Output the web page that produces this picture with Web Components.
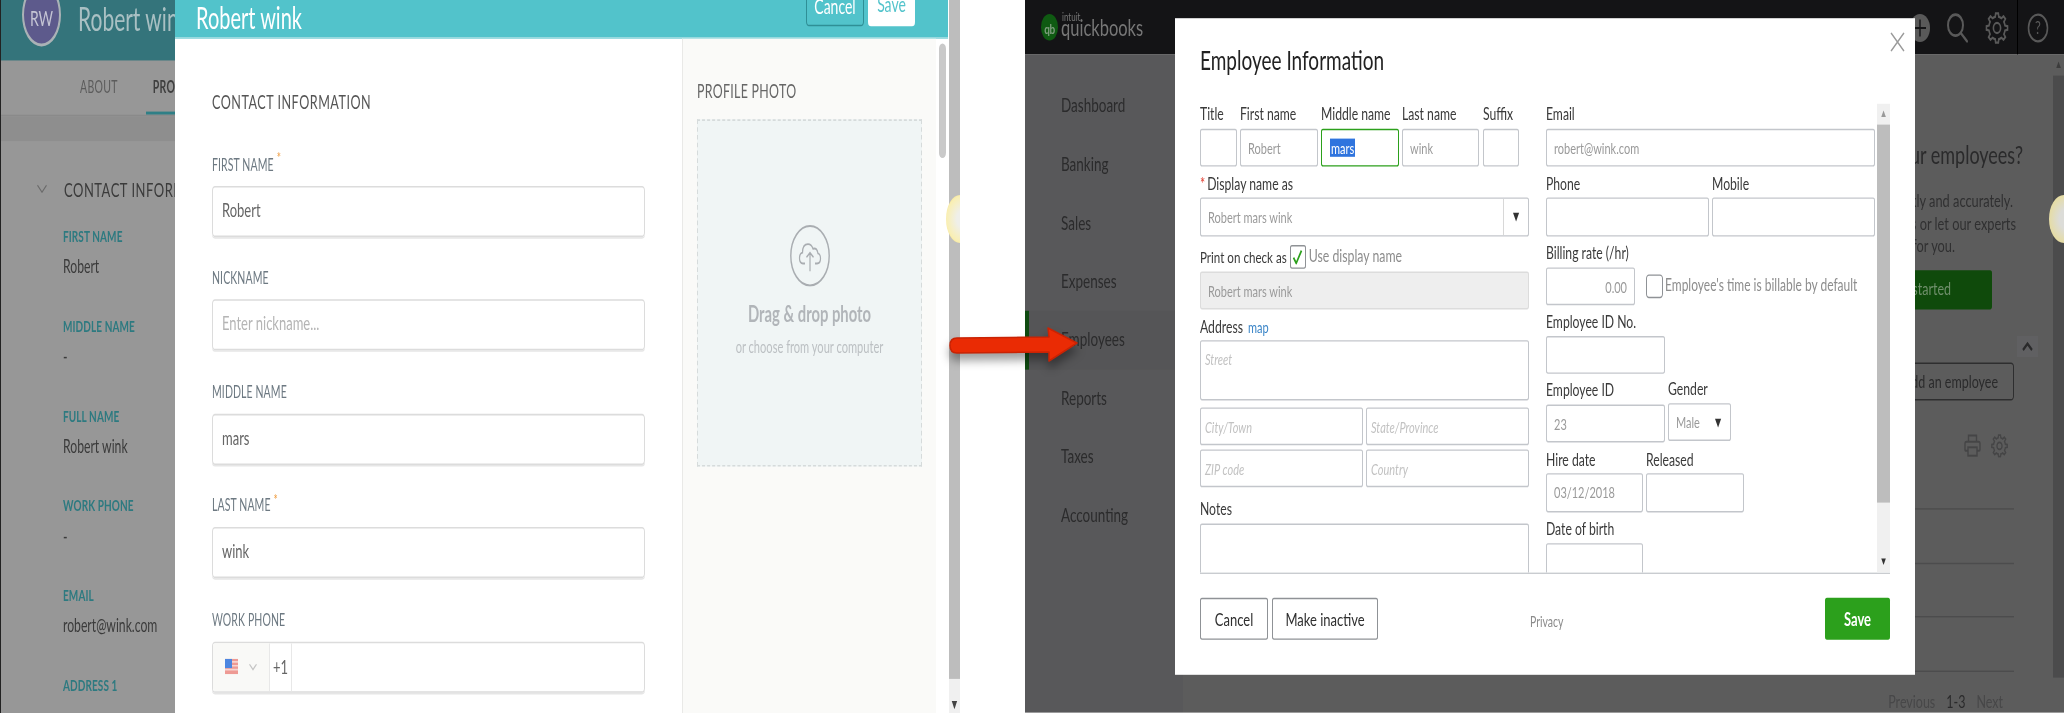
<!DOCTYPE html>
<html>
<head>
<meta charset="utf-8">
<title>Employee screens</title>
<style>
  html, body { margin: 0; background: #fff; }
  body { width: 2064px; height: 713px; overflow: hidden; }
</style>
</head>
<body>
<shot-pair></shot-pair>
<script>
// the two screenshots in the reference are stretched vertically, each by its own amount
const SL = 1.55;
const SR = 1.4;
const vl = n => (n / SL).toFixed(2) + 'px';
const vr = n => (n / SR).toFixed(2) + 'px';

function gearPath(c, r1, r2, n) {
  let d = '';
  for (let i = 0; i < n; i++) {
    const step = Math.PI * 2 / n;
    const a = i * step;
    const pts = [[r1, a - step * .5], [r1, a - step * .28], [r2, a - step * .16], [r2, a + step * .16], [r1, a + step * .28]];
    pts.forEach(([r, t], j) => {
      d += (i === 0 && j === 0 ? 'M' : 'L') + (c + r * Math.cos(t)).toFixed(2) + ' ' + (c + r * Math.sin(t)).toFixed(2);
    });
  }
  return d + 'Z';
}

class ShotPair extends HTMLElement {
  connectedCallback() {
    this.attachShadow({ mode: 'open' });
    this.shadowRoot.innerHTML = `
      <style>
        :host { display: flex; width: 2064px; height: 713px; position: relative; overflow: hidden; background: #fff; }
        bamboo-shot { flex: 0 0 960px; }
        qbo-shot { flex: 0 0 1039px; margin-left: 65px; }
        svg { position: absolute; left: 930px; top: 310px; }
      </style>
      <bamboo-shot></bamboo-shot>
      <qbo-shot></qbo-shot>
      <svg width="170" height="70" viewBox="0 0 170 70" style="filter:drop-shadow(0 7px 5px rgba(0,0,0,.38))">
        <path d="M27 28 L119 27 L118 18 L147 33 L119 51 L119 42 L27 43 Q20 43 20 35.5 Q20 28 27 28Z" fill="#ea2b04" stroke="#c92304" stroke-width="1.5" stroke-linejoin="round"/>
      </svg>
    `;
  }
}

/* ---------- left screenshot ---------- */

class BambooShot extends HTMLElement {
  connectedCallback() {
    this.attachShadow({ mode: 'open' });
    this.shadowRoot.innerHTML = `
      <style>
        :host { display: block; height: 713px; overflow: hidden; position: relative; font-family: Lato, "Liberation Sans", sans-serif; }
        .stage { display: flex; width: 960px; height: ${vl(713)}; transform: scaleY(${SL}); transform-origin: 0 0; }
        .bar { flex: 0 0 11px; margin-left: 1px; display: flex; flex-direction: column; background: #f0f0f0; }
        .bar i { display: block; height: ${vl(679)}; background: #bdbdbd; }
        .bar b { margin-top: auto; text-align: center; font: 400 7px/${vl(14)} "DejaVu Sans", sans-serif; color: #444; }
        .glow { position: absolute; left: 946px; top: 195px; width: 28px; height: 48px; border-radius: 50%;
          background: radial-gradient(ellipse at 60% 50%, #efefea 25%, #f9efb4 68%, #efd060 100%); }
      </style>
      <div class="stage">
        <profile-backdrop></profile-backdrop>
        <employee-drawer></employee-drawer>
        <div class="bar"><i></i><b>▼</b></div>
      </div>
      <div class="glow"></div>
    `;
  }
}

class ProfileBackdrop extends HTMLElement {
  connectedCallback() {
    this.attachShadow({ mode: 'open' });
    const rows = [['FIRST NAME', 'Robert'], ['MIDDLE NAME', '-'], ['FULL NAME', 'Robert wink'], ['WORK PHONE', '-'], ['EMAIL', 'robert@wink.com'], ['ADDRESS 1', '']];
    this.shadowRoot.innerHTML = `
      <style>
        :host { display: block; flex: 0 0 174px; border-left: 1px solid #222; overflow: hidden; background: #979797; white-space: nowrap; color: #3b3b3b; }
        .head { display: flex; height: ${vl(60)}; background: #34747b; overflow: hidden; }
        .avatar { flex: 0 0 auto; box-sizing: border-box; width: 39px; height: ${vl(64)}; margin: ${vl(-17)} 0 0 21px; border: 2px solid #aab2b6; border-radius: 50%;
          background: #5d5a8c; color: #c4c4d4; font-size: 14px; text-align: center; line-height: ${vl(64)}; }
        .name { margin-left: 17px; font-size: 21px; line-height: ${vl(36)}; color: #a9c0c3; }
        .tabs { display: flex; height: ${vl(54)}; border-bottom: 1px solid #8a8a8a; font-size: 10.5px; letter-spacing: .3px; line-height: ${vl(54)}; }
        .tabs span:first-child { margin-left: 79px; color: #5c5c5c; }
        .tabs span:last-child { margin-left: 28px; padding-left: 7px; font-weight: 700; flex: 1; overflow: hidden; color: #3f3f3f; position: relative; }
        .tabs span:last-child::after { content: ""; position: absolute; left: 0; right: 0; bottom: 0; height: ${vl(3)}; background: #2f7f86; }
        .band { height: ${vl(25)}; background: #8e8e8e; }
        .title { display: flex; align-items: center; height: ${vl(28)}; margin: ${vl(34)} 0 ${vl(16)}; font-size: 13px; letter-spacing: .5px; }
        .title svg { margin: 0 17px 0 36px; flex: none; }
        .row { height: ${vl(90)}; padding-left: 62px; }
        .row b { display: block; height: ${vl(36)}; line-height: ${vl(36)}; font-size: 10px; font-weight: 700; color: #2d7a80; letter-spacing: .1px; }
        .row span { display: block; height: ${vl(26)}; line-height: ${vl(26)}; font-size: 12.2px; }
      </style>
      <div class="head"><div class="avatar">RW</div><div class="name">Robert wink</div></div>
      <div class="tabs"><span>ABOUT</span><span>PROFILE</span></div>
      <div class="band"></div>
      <div class="title"><svg width="10" height="6" viewBox="0 0 10 6"><path d="M.5 .5 L5 5 L9.5 .5" fill="none" stroke="#6a6a6a"/></svg>CONTACT INFORMATION</div>
      ${rows.map(([k, val]) => `<div class="row"><b>${k}</b><span>${val}</span></div>`).join('')}
    `;
  }
}

class EmployeeDrawer extends HTMLElement {
  connectedCallback() {
    this.attachShadow({ mode: 'open' });
    this.shadowRoot.innerHTML = `
      <style>
        :host { display: flex; flex-direction: column; flex: 0 0 773px; background: #fff; overflow: hidden; }
        header { display: flex; flex: 0 0 auto; height: ${vl(39)}; box-sizing: border-box; background: #52c3cb; border-bottom: 1px solid #a8dfe3; padding: 0 33px 0 21px; }
        h1 { margin: 0 auto 0 0; font: 400 20px/${vl(36)} Lato, sans-serif; color: #fff; }
        .btn { box-sizing: border-box; height: ${vl(44)}; margin-top: ${vl(-18)}; border-radius: 3px; font-size: 14px; text-align: center; line-height: ${vl(48)}; }
        .cancel { width: 58px; border: 1px solid #2f8f96; color: #fff; }
        .save { width: 47px; margin-left: 4px; background: #fff; color: #52c3cb; }
        main { display: flex; flex: 1; min-height: 0; }
        .form { flex: 0 0 470px; padding-left: 37px; }
        h2 { margin: ${vl(49)} 0 ${vl(37)}; font: 400 12.6px/${vl(28)} Lato, sans-serif; letter-spacing: .5px; color: #555; }
        aside { flex: 0 0 239px; padding-left: 14px; background: #fafaf8; border-left: 1px solid #e9e9e7; }
        aside h3 { margin: ${vl(37)} 0 ${vl(16)}; font: 400 12.4px/${vl(30)} Lato, sans-serif; letter-spacing: .3px; color: #666; height: ${vl(28)}; }
        .drop { display: flex; flex-direction: column; align-items: center; box-sizing: border-box; width: 225px; height: ${vl(346)}; padding-top: ${vl(104)};
          background: #f0f5f5; border: 1px dashed #d6dbdb; }
        .drop strong { margin-top: ${vl(10)}; font: 700 14.8px/${vl(34)} Lato, sans-serif; color: #b1b5b9; }
        .drop small { margin-top: ${vl(4)}; font: 400 11.1px/${vl(24)} Lato, sans-serif; color: #bcc0c3; }
        .gutter { flex: 0 0 12px; padding-left: 3px; box-sizing: border-box; }
        .gutter i { display: block; width: 7px; height: ${vl(115)}; margin-top: ${vl(4)}; background: #c9c9c9; border-radius: 4px; }
      </style>
      <header>
        <h1>Robert wink</h1>
        <div class="btn cancel">Cancel</div>
        <div class="btn save">Save</div>
      </header>
      <main>
        <div class="form">
          <h2>CONTACT INFORMATION</h2>
          <bb-field label="FIRST NAME" required value="Robert"></bb-field>
          <bb-field label="NICKNAME" placeholder="Enter nickname..."></bb-field>
          <bb-field label="MIDDLE NAME" value="mars"></bb-field>
          <bb-field label="LAST NAME" required value="wink"></bb-field>
          <bb-field label="WORK PHONE"><phone-prefix></phone-prefix></bb-field>
        </div>
        <aside>
          <h3>PROFILE PHOTO</h3>
          <div class="drop">
            <svg width="40" height="40" viewBox="0 0 40 40">
              <circle cx="20" cy="20" r="19.2" fill="none" stroke="#a9adb1" stroke-width="1.4"/>
              <path d="M15 25 H13 Q9.5 25 9.5 21.5 Q9.5 18.5 12.5 18 Q12.5 12.5 18 12.5 Q21.5 12.5 23 15.5 Q27 14.5 28 18.5 Q30.5 19 30.5 21.8 Q30.5 25 27 25 H25" fill="none" stroke="#a9adb1" stroke-width="1.2"/>
              <path d="M20 30 V18 M16.5 21 L20 18 L23.5 21" fill="none" stroke="#a9adb1" stroke-width="1.2"/>
            </svg>
            <strong>Drag &amp; drop photo</strong>
            <small>or choose from your computer</small>
          </div>
        </aside>
        <div class="gutter"><i></i></div>
      </main>
    `;
  }
}

class BbField extends HTMLElement {
  connectedCallback() {
    this.attachShadow({ mode: 'open' });
    const val = this.getAttribute('value') || '';
    const ph = this.getAttribute('placeholder') || '';
    const star = this.hasAttribute('required') ? '<sup>*</sup>' : '';
    this.shadowRoot.innerHTML = `
      <style>
        :host { display: block; width: 433px; margin-bottom: ${vl(30)}; }
        label { display: block; height: ${vl(20)}; margin-bottom: ${vl(13)}; font: 400 10.5px/${vl(22)} Lato, sans-serif; color: #6d7982; letter-spacing: .1px; }
        sup { color: #ef9a3c; font-size: 10px; line-height: 0; margin-left: 3px; }
        .box { display: flex; box-sizing: border-box; height: ${vl(51)}; border: 1px solid #dcdcdc; border-radius: 3px; box-shadow: 0 1px 0 #e6e6e6;
          font: 400 13px/${vl(46)} Lato, sans-serif; color: #666; overflow: hidden; }
        .txt { padding-left: 9px; }
        .ph { color: #b5b5b5; }
      </style>
      <label>${this.getAttribute('label')}${star}</label>
      <div class="box"><slot><span class="txt ${ph ? 'ph' : ''}">${val || ph}</span></slot></div>
    `;
  }
}

class PhonePrefix extends HTMLElement {
  connectedCallback() {
    this.attachShadow({ mode: 'open' });
    this.shadowRoot.innerHTML = `
      <style>
        :host { display: flex; align-items: stretch; height: 100%; color: #666; font: 400 13px/1 Lato, sans-serif; }
        .flag { display: flex; align-items: center; gap: 11px; width: 57px; box-sizing: border-box; padding-left: 12px; background: #f9f9f7; border-right: 1px solid #e8e8e8; }
        .code { width: 21px; display: flex; align-items: center; justify-content: center; border-right: 1px solid #e8e8e8; }
      </style>
      <div class="flag">
        <svg width="13" height="10" viewBox="0 0 13 10">
          <rect width="13" height="10" fill="#ee9a94"/>
          <path d="M0 2h13M0 4.5h13M0 7h13" stroke="#f6d4d0" stroke-width="1"/>
          <rect width="7" height="6" fill="#4d86e0"/>
        </svg>
        <svg width="8" height="5" viewBox="0 0 8 5"><path d="M.5 .5 L4 4 L7.5 .5" fill="none" stroke="#c4c4c4"/></svg>
      </div>
      <div class="code">+1</div>
    `;
  }
}

/* ---------- right screenshot ---------- */

class QboShot extends HTMLElement {
  connectedCallback() {
    this.attachShadow({ mode: 'open' });
    this.shadowRoot.innerHTML = `
      <style>
        :host { display: block; height: 713px; overflow: hidden; position: relative; font-family: Lato, "Liberation Sans", sans-serif; }
        .stage { width: 1039px; height: ${vr(713)}; position: relative; transform: scaleY(${SR}); transform-origin: 0 0; }
        .body { display: flex; height: ${vr(658)}; }
        qbo-modal { position: absolute; left: 150px; top: ${vr(18)}; }
        .glow { position: absolute; left: 1024px; top: 195px; width: 30px; height: 48px; border-radius: 50%;
          background: radial-gradient(ellipse at 60% 50%, #dcdcd8 30%, #e6dca0 75%, #bfa640 100%); }
      </style>
      <div class="stage">
        <qbo-topbar></qbo-topbar>
        <div class="body">
          <qbo-sidebar></qbo-sidebar>
          <qbo-main></qbo-main>
        </div>
        <qbo-modal></qbo-modal>
      </div>
      <div class="glow"></div>
    `;
  }
}

class QboTopbar extends HTMLElement {
  connectedCallback() {
    this.attachShadow({ mode: 'open' });
    this.shadowRoot.innerHTML = `
      <style>
        :host { display: flex; align-items: center; height: ${vr(55)}; background: #141416; color: #777; }
        .qb { flex: none; display: flex; align-items: center; justify-content: center; width: 17px; height: ${vr(26)}; margin-left: 16px; border-radius: 50%;
          background: #0f5a12; color: #7d9c7d; font-size: 10px; font-weight: 700; letter-spacing: -.5px; }
        .word { position: relative; margin-left: 3px; padding-top: ${vr(3)}; font-size: 16.5px; line-height: ${vr(24)}; font-weight: 400; letter-spacing: 0; }
        .word small { position: absolute; left: 1px; top: ${vr(-3)}; font-size: 8px; line-height: ${vr(12)}; font-weight: 400; }
        .tools { margin-left: auto; display: flex; align-items: center; padding-right: 14px; height: 100%; }
        .tools svg { flex: none; }
        .div { width: 1px; height: 100%; background: #000; margin: 0 8px; }
      </style>
      <div class="qb">qb</div>
      <div class="word"><small>intuit</small>quickbooks</div>
      <div class="tools">
        <svg width="24" height="24" viewBox="0 0 24 24" style="margin-right:13px"><circle cx="12" cy="12" r="10" fill="#595959"/><path d="M12 6v12M6 12h12" stroke="#141416" stroke-width="1.4"/></svg>
        <svg width="24" height="24" viewBox="0 0 24 24" style="margin-right:16px" fill="none" stroke="#595959" stroke-width="2"><circle cx="10.5" cy="10" r="7.5"/><path d="M15.8 15.5 L22 21.5" stroke-linecap="round"/></svg>
        <svg width="24" height="24" viewBox="0 0 24 24" fill="none" stroke="#595959" stroke-width="1.6"><path d="${gearPath(12, 8.2, 10.6, 8)}"/><circle cx="12" cy="12" r="3.6"/></svg>
        <div class="div"></div>
        <svg width="24" height="24" viewBox="0 0 24 24"><circle cx="12" cy="12" r="9.5" fill="none" stroke="#595959" stroke-width="1.6"/><text x="12" y="16.5" text-anchor="middle" font-family="Lato, sans-serif" font-size="13" fill="#595959">?</text></svg>
      </div>
    `;
  }
}

class QboSidebar extends HTMLElement {
  connectedCallback() {
    this.attachShadow({ mode: 'open' });
    const items = ['Dashboard', 'Banking', 'Sales', 'Expenses', 'Employees', 'Reports', 'Taxes', 'Accounting'];
    this.shadowRoot.innerHTML = `
      <style>
        :host { display: block; flex: 0 0 158px; padding-top: ${vr(22)}; background: #58585a; }
        div { box-sizing: border-box; height: ${vr(58.6)}; line-height: ${vr(58.6)}; padding-left: 32px; border-left: 4px solid transparent; font-size: 13.5px; color: #2b2b2c; }
        .on { border-left-color: #0f4a10; background: #555557; }
      </style>
      ${items.map(t => `<div class="${t === 'Employees' ? 'on' : ''}">${t}</div>`).join('')}
    `;
  }
}

class QboMain extends HTMLElement {
  connectedCallback() {
    this.attachShadow({ mode: 'open' });
    this.shadowRoot.innerHTML = `
      <style>
        :host { display: flex; flex: 1; min-width: 0; background: #5c5c5c; color: #2a2a2b; overflow: hidden; }
        .col { flex: 1; min-width: 0; padding-top: ${vr(80)}; display: flex; flex-direction: column; align-items: flex-end; white-space: nowrap; }
        h2 { margin: 0 30px ${vr(16)} 0; font: 400 18px/${vr(40)} Lato, sans-serif; }
        p { margin: 0; font: 400 12.8px/${vr(22)} Lato, sans-serif; color: #303031; }
        .go { box-sizing: border-box; width: 140px; height: ${vr(39)}; margin: ${vr(13)} 61px 0 0; padding-right: 41px; border-radius: 2px; background: #0f4a0b; text-align: right; font: 400 12.5px/${vr(39)} Lato, sans-serif; color: #6f8f6b; }
        .up { box-sizing: border-box; width: 21px; height: ${vr(24)}; margin: ${vr(27)} 15px 0 0; background: #606062; display: flex; align-items: center; justify-content: center; }
        .add { box-sizing: border-box; width: 130px; height: ${vr(38)}; margin: ${vr(6)} 39px 0 0; padding-right: 15px; border: 1px solid #2e2e2f; border-radius: 3px; text-align: right; font: 400 12.5px/${vr(35)} Lato, sans-serif; }
        .tools { display: flex; gap: 10px; align-items: center; margin: ${vr(33)} 45px ${vr(51)} 0; height: ${vr(24)}; }
        hr { align-self: stretch; border: 0; height: ${vr(1.4)}; background: #4c4c4d; margin: 0 39px ${vr(53)} 0; }
        .pages { margin: ${vr(-32)} 50px 0 0; display: flex; gap: 11px; font: 400 12.5px/${vr(20)} Lato, sans-serif; color: #474748; }
        .pages b { font-weight: 400; color: #2a2a2b; }
        .bar { flex: 0 0 11px; display: flex; flex-direction: column; }
        .bar span { height: ${vr(20)}; text-align: center; font: 400 6px/${vr(20)} "DejaVu Sans", sans-serif; color: #3c3c3c; }
        .bar i { display: block; height: ${vr(603)}; background: #4b4b4c; }
      </style>
      <div class="col">
        <h2>your employees?</h2>
        <p style="margin-right:40px">quickly and accurately.</p>
        <p style="margin-right:37px">forms or let our experts</p>
        <p style="margin-right:98px">do it for you.</p>
        <div class="go">Get started</div>
        <div class="up"><svg width="11" height="7" viewBox="0 0 11 7"><path d="M1 6 L5.5 1.5 L10 6" fill="none" stroke="#2a2a2b" stroke-width="2"/></svg></div>
        <div class="add">Add an employee</div>
        <div class="tools">
          <svg width="17" height="17" viewBox="0 0 17 17" fill="none" stroke="#454546" stroke-width="1.4"><path d="M4.5 5 V1 H12.5 V5"/><path d="M4 12 H2 Q1 12 1 11 V7 Q1 5.5 2.5 5.5 H14.5 Q16 5.5 16 7 V11 Q16 12 15 12 H13"/><rect x="4" y="9.5" width="9" height="6"/></svg>
          <svg width="17" height="17" viewBox="0 0 24 24" fill="none" stroke="#454546" stroke-width="1.8"><path d="${gearPath(12, 8.4, 11, 8)}"/><circle cx="12" cy="12" r="3.6"/></svg>
        </div>
        <hr><hr><hr><hr>
        <div class="pages"><span>Previous</span><b>1-3</b><span>Next</span></div>
      </div>
      <div class="bar"><span>▲</span><i></i></div>
    `;
  }
}

class QbField extends HTMLElement {
  connectedCallback() {
    this.attachShadow({ mode: 'open' });
    const w = this.getAttribute('w');
    const h = this.getAttribute('h') || 38;
    const kind = this.getAttribute('kind') || '';
    const label = this.getAttribute('label');
    this.shadowRoot.innerHTML = `
      <style>
        :host { display: block; flex: none; width: ${w}px; margin-bottom: ${vr(this.getAttribute('after') || 6)}; white-space: nowrap; }
        label { display: block; height: ${vr(20)}; margin-bottom: ${vr(5)}; font: 400 12.2px/${vr(22)} Lato, sans-serif; color: #3a3a3a; }
        .box { box-sizing: border-box; height: ${vr(h)}; padding: 0 7px; border: 1px solid #c3c6cb; border-radius: 2px; font: 400 11px/${vr(36)} Lato, sans-serif; color: #9a9a9a; overflow: hidden; }
        .off { background: #eeeeee; border-color: #dcdcdc; }
        .right { text-align: right; }
        .focus { border: 1.4px solid #2ca01c; }
      </style>
      ${label ? `<label>${label}</label>` : ''}
      <div class="box ${kind}"><slot></slot></div>
    `;
  }
}

class QbSelect extends HTMLElement {
  connectedCallback() {
    this.attachShadow({ mode: 'open' });
    const w = this.getAttribute('w');
    const side = +this.getAttribute('side');
    const label = this.getAttribute('label');
    this.shadowRoot.innerHTML = `
      <style>
        :host { display: block; flex: none; width: ${w}px; margin-bottom: ${vr(6)}; white-space: nowrap; }
        label { display: block; height: ${vr(20)}; margin-bottom: ${vr(5)}; font: 400 12.2px/${vr(22)} Lato, sans-serif; color: #3a3a3a; }
        .box { display: flex; box-sizing: border-box; height: ${vr(38)}; border: 1px solid #c3c6cb; border-radius: 2px; font: 400 11px/${vr(36)} Lato, sans-serif; color: #9a9a9a; overflow: hidden; }
        span { flex: 1; padding-left: 7px; }
        b { flex: 0 0 ${side}px; text-align: center; font: 400 8px/${vr(36)} "DejaVu Sans", sans-serif; color: #333; border-left: ${this.hasAttribute('plain') ? 0 : 1}px solid #d8d8d8; }
      </style>
      ${label ? `<label>${label}</label>` : ''}
      <div class="box"><span><slot></slot></span><b>▼</b></div>
    `;
  }
}

class QboModal extends HTMLElement {
  connectedCallback() {
    this.attachShadow({ mode: 'open' });
    const lbl = `font:400 12.2px/${vr(22)} Lato,sans-serif;color:#3a3a3a`;
    this.shadowRoot.innerHTML = `
      <style>
        :host { display: block; box-sizing: border-box; width: 740px; height: ${vr(657)}; padding: ${vr(26)} 25px 0; background: #fff; color: #2f2f2f; font-family: Lato, sans-serif; }
        .x { position: absolute; right: 10px; top: ${vr(14)}; }
        h1 { margin: 0 0 ${vr(26)}; font: 400 19px/${vr(34)} Lato, sans-serif; color: #222; }
        .scroll { display: flex; width: 690px; height: ${vr(468)}; border-bottom: 1px solid #c9ccd0; overflow: hidden; }
        .col { flex: 0 0 329px; }
        .col + .col { margin-left: 17px; }
        .row { display: flex; gap: 3px; }
        .lab { height: ${vr(20)}; margin-bottom: ${vr(5)}; ${lbl}; white-space: nowrap; }
        .lab em { color: #e03a2c; font-style: normal; margin-right: 2px; }
        .lab a { color: #3c86c8; margin-left: 5px; font-size: 11px; }
        .print { display: flex; align-items: center; height: ${vr(30)}; font: 400 11.6px/1 Lato, sans-serif; color: #3a3a3a; white-space: nowrap; }
        .check { flex: none; box-sizing: border-box; width: 16px; height: ${vr(23)}; margin: 0 3px; border: 1px solid #8f9296; border-radius: 2px; display: flex; align-items: center; justify-content: center; }
        .print span { color: #8d8d8d; font-size: 12.3px; }
        .ph { font-style: italic; color: #c2c2c2; margin-left: -3px; }
        mark { background: #2f74de; color: #fff; margin-left: 1px; padding: 0 1px; }
        .rate { display: flex; align-items: flex-start; }
        .rate div { display: flex; align-items: center; height: ${vr(38)}; margin: ${vr(25)} 0 0 11px; font: 400 12px/1 Lato, sans-serif; color: #8d8d8d; white-space: nowrap; }
        .rate i { flex: none; box-sizing: border-box; width: 17px; height: ${vr(24)}; margin-right: 2px; border: 1px solid #8f9296; border-radius: 3px; }
        .bar { flex: 0 0 13px; margin-left: 2px; display: flex; flex-direction: column; background: #f0f0f0; }
        .bar span { height: ${vr(20)}; text-align: center; font: 400 6px/${vr(20)} "DejaVu Sans", sans-serif; color: #999; }
        .bar i { display: block; height: ${vr(379)}; background: #bdbdbd; }
        .bar span:last-child { margin-top: auto; color: #333; }
        footer { display: flex; width: 690px; margin-top: ${vr(25)}; align-items: center; }
        button { box-sizing: border-box; height: ${vr(42)}; padding: 0; border: 1px solid #8f9296; border-radius: 2px; background: #fff; font: 400 13px/1 Lato, sans-serif; color: #2f2f2f; }
        .privacy { margin-left: 152px; padding-top: ${vr(5)}; font-size: 10.5px; color: #8b8b8b; }
        .save { width: 65px; margin-left: auto; border: 0; background: #2ca01c; color: #fff; font-weight: 700; }
      </style>
      <svg class="x" width="15" height="14" viewBox="0 0 15 14"><path d="M1 .5 L14 13.5 M14 .5 L1 13.5" stroke="#9a9a9a" stroke-width="1.3"/></svg>
      <h1>Employee Information</h1>
      <div class="scroll">
        <div class="col">
          <div class="row">
            <qb-field label="Title" w="37"></qb-field>
            <qb-field label="First name" w="78">Robert</qb-field>
            <qb-field label="Middle name" w="78" kind="focus"><mark>mars</mark></qb-field>
            <qb-field label="Last name" w="77">wink</qb-field>
            <qb-field label="Suffix" w="36" style="margin-left:1px"></qb-field>
          </div>
          <div class="lab"><em>*</em>Display name as</div>
          <qb-select w="329" side="24">Robert mars wink</qb-select>
          <div class="print">Print on check as<div class="check"><svg width="11" height="11" viewBox="0 0 11 11"><path d="M1.5 6 L4.2 10 L9.5 1" fill="none" stroke="#2ca01c" stroke-width="1.6"/></svg></div><span>Use display name</span></div>
          <qb-field w="329" kind="off">Robert mars wink</qb-field>
          <div class="lab">Address<a>map</a></div>
          <qb-field w="329" h="59" after="7"><span class="ph">Street</span></qb-field>
          <div class="row">
            <qb-field w="163" after="5"><span class="ph">City/Town</span></qb-field>
            <qb-field w="163" after="5"><span class="ph">State/Province</span></qb-field>
          </div>
          <div class="row">
            <qb-field w="163" after="11"><span class="ph">ZIP code</span></qb-field>
            <qb-field w="163" after="11"><span class="ph">Country</span></qb-field>
          </div>
          <qb-field label="Notes" w="329" h="70"></qb-field>
        </div>
        <div class="col">
          <qb-field label="Email" w="329">robert@wink.com</qb-field>
          <div class="row">
            <qb-field label="Phone" w="163"></qb-field>
            <qb-field label="Mobile" w="163"></qb-field>
          </div>
          <div class="rate">
            <qb-field label="Billing rate (/hr)" w="89" kind="right">0.00</qb-field>
            <div><i></i>Employee's time is billable by default</div>
          </div>
          <qb-field label="Employee ID No." w="119"></qb-field>
          <div class="row">
            <qb-field label="Employee ID" w="119">23</qb-field>
            <qb-select label="Gender" w="63" side="24" plain style="margin-top:-1px">Male</qb-select>
          </div>
          <div class="row">
            <qb-field label="Hire date" w="97">03/12/2018</qb-field>
            <qb-field label="Released" w="98"></qb-field>
          </div>
          <qb-field label="Date of birth" w="97" h="60"></qb-field>
        </div>
        <div class="bar"><span>▲</span><i></i><span>▼</span></div>
      </div>
      <footer>
        <button style="width:68px">Cancel</button>
        <button style="width:106px;margin-left:4px">Make inactive</button>
        <div class="privacy">Privacy</div>
        <button class="save">Save</button>
      </footer>
    `;
  }
}

customElements.define('bb-field', BbField);
customElements.define('phone-prefix', PhonePrefix);
customElements.define('profile-backdrop', ProfileBackdrop);
customElements.define('employee-drawer', EmployeeDrawer);
customElements.define('bamboo-shot', BambooShot);
customElements.define('qb-field', QbField);
customElements.define('qb-select', QbSelect);
customElements.define('qbo-topbar', QboTopbar);
customElements.define('qbo-sidebar', QboSidebar);
customElements.define('qbo-main', QboMain);
customElements.define('qbo-modal', QboModal);
customElements.define('qbo-shot', QboShot);
customElements.define('shot-pair', ShotPair);
</script>
</body>
</html>
